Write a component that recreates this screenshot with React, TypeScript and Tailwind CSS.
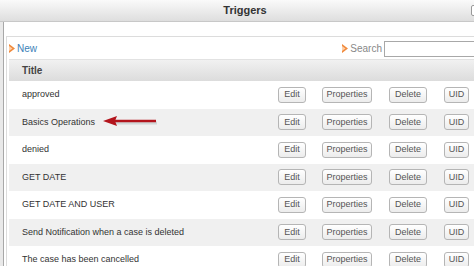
const rows = [
  "approved",
  "Basics Operations",
  "denied",
  "GET DATE",
  "GET DATE AND USER",
  "Send Notification when a case is deleted",
  "The case has been cancelled",
];

function Btn({ label, w }: { label: string; w: string }) {
  return (
    <div
      className={`${w} flex h-[16px] items-center justify-center rounded-[3px] border border-[#b5b5b5] bg-gradient-to-b from-white to-[#ececec] text-[9px] text-[#555]`}
    >
      {label}
    </div>
  );
}

function Arrow() {
  return (
    <svg width="56" height="14" viewBox="0 0 56 14" className="ml-[8px]">
      <line x1="10" y1="8" x2="54" y2="8" stroke="#9aa" strokeOpacity="0.35" strokeWidth="3" />
      <line x1="9" y1="6" x2="53" y2="6" stroke="#b3141c" strokeWidth="2.5" />
      <polygon points="0,6 14,1 12,6 14,11" fill="#b3141c" />
    </svg>
  );
}

function OrangeMark() {
  return (
    <svg width="6" height="9" viewBox="0 0 6 9" className="mr-[2px]">
      <polygon points="0,0 6,4.5 0,9" fill="#f08a3c" />
      <polygon points="0,2 3.5,4.5 0,7" fill="#ffd0a8" />
    </svg>
  );
}

export default function App() {
  return (
    <div
      className="h-[266px] w-[474px] overflow-hidden bg-[#e9e9e9]"
      style={{ fontFamily: "Tahoma, 'Liberation Sans', Arial, sans-serif" }}
    >
      <div className="relative flex h-[22px] items-center justify-center border-b border-[#c8c8c8] bg-gradient-to-b from-[#fafafa] to-[#dedede]">
        <span className="ml-[16px] text-[11px] font-bold text-[#333]">Triggers</span>
        <div className="absolute right-[-6px] top-[5px] h-[11px] w-[9px] rounded-[2px] border border-[#999] bg-white" />
      </div>
      <div className="ml-[3px] h-[244px] border-l border-[#a8a8a8] bg-white">
        <div className="h-[14px]" />
        <div className="ml-[2px] border-l border-t border-[#dcdcdc] pl-[2px]">
          <div className="flex h-[22px] items-center pt-[1px]">
            <OrangeMark />
            <span className="text-[10px] text-[#3d7fb8]">New</span>
            <div className="ml-auto flex items-center">
              <OrangeMark />
              <span className="mr-[2px] text-[10px] text-[#888]">Search</span>
              <div className="mr-[-10px] h-[16px] w-[100px] border border-[#a8a8a8] bg-white" />
            </div>
          </div>
          <div>
            <div className="flex h-[22px] items-center border-t border-[#e2e2e2] bg-gradient-to-b from-[#f1f1f1] to-[#dcdcdc] pl-[13px] text-[10px] font-bold text-[#444]">
              Title
            </div>
            {rows.map((r, i) => (
              <div
                key={r}
                className={`flex h-[27.5px] items-center pl-[13px] text-[9px] text-[#333] ${i % 2 === 1 ? "bg-[#f0f0f0]" : "bg-white"}`}
              >
                <span>{r}</span>
                {i === 1 && <Arrow />}
                <div className="ml-auto mr-[5px] flex items-center">
                  <Btn label="Edit" w="w-[28px]" />
                  <div className="w-[16px]" />
                  <Btn label="Properties" w="w-[50px]" />
                  <div className="w-[17px]" />
                  <Btn label="Delete" w="w-[38px]" />
                  <div className="w-[17px]" />
                  <Btn label="UID" w="w-[25px]" />
                </div>
              </div>
            ))}
          </div>
        </div>
      </div>
    </div>
  );
}
